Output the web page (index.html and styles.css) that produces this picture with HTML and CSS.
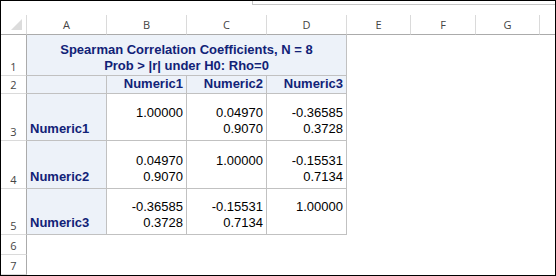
FILE: index.html
```html
<!DOCTYPE html>
<html lang="en">
<head>
    <meta charset="UTF-8">
    <title>Spearman Correlation</title>
    <link rel="stylesheet" href="styles.css">
</head>
<body>

    <div class="sheet">

        <div class="topbar">
            <div class="formula-edge"></div>
        </div>

        <div class="grid">

            <div class="corner"><span class="tri"></span></div>
            <div class="colhead">A</div>
            <div class="colhead">B</div>
            <div class="colhead">C</div>
            <div class="colhead">D</div>
            <div class="colhead">E</div>
            <div class="colhead">F</div>
            <div class="colhead">G</div>
            <div class="colhead last"></div>

            <div class="rownum">1</div>
            <div class="cell head title">
                <div>Spearman Correlation Coefficients, N = 8</div>
                <div>Prob &gt; |r| under H0: Rho=0</div>
            </div>
            <div class="blank"></div>

            <div class="rownum">2</div>
            <div class="cell head top"></div>
            <div class="cell head top num">Numeric1</div>
            <div class="cell head top num">Numeric2</div>
            <div class="cell head top num">Numeric3</div>
            <div class="blank"></div>

            <div class="rownum">3</div>
            <div class="cell head label">Numeric1</div>
            <div class="cell num"><div>1.00000</div><div>&nbsp;</div></div>
            <div class="cell num"><div>0.04970</div><div>0.9070</div></div>
            <div class="cell num"><div>-0.36585</div><div>0.3728</div></div>
            <div class="blank"></div>

            <div class="rownum">4</div>
            <div class="cell head label">Numeric2</div>
            <div class="cell num"><div>0.04970</div><div>0.9070</div></div>
            <div class="cell num"><div>1.00000</div><div>&nbsp;</div></div>
            <div class="cell num"><div>-0.15531</div><div>0.7134</div></div>
            <div class="blank"></div>

            <div class="rownum">5</div>
            <div class="cell head label">Numeric3</div>
            <div class="cell num"><div>-0.36585</div><div>0.3728</div></div>
            <div class="cell num"><div>-0.15531</div><div>0.7134</div></div>
            <div class="cell num"><div>1.00000</div><div>&nbsp;</div></div>
            <div class="blank"></div>

            <div class="rownum">6</div>
            <div class="blank wide"></div>

            <div class="rownum">7</div>
            <div class="blank wide"></div>

        </div>

    </div>

</body>
</html>
```

FILE: styles.css
```css
*{
    box-sizing: border-box;
}

body{
    margin: 0px;
    background: white;
}

.sheet{
    width: 556px;
    height: 276px;
    border: 1px solid black;
    background: white;
    overflow: hidden;
}

.topbar{
    height: 14px;
}

.formula-edge{
    margin-left: 251px;
    height: 4px;
    border-left: 1px solid #c6c6c6;
    border-bottom: 1px solid #c6c6c6;
}

.grid{
    display: grid;
    grid-template-columns: 26px 80px 80px 80px 80px 64px 65px 64px 15px;
    grid-template-rows: 20px 41px 18px 47px 48px 46px 20px 20px;
}

/* column + row headers */
.corner{
    display: flex;
    justify-content: flex-end;
    align-items: flex-end;
    padding: 0 4px 4px 0;
    border-right: 1px solid #dadada;
    border-bottom: 1px solid #ababab;
}

.tri{
    width: 0;
    height: 0;
    border-left: 11px solid transparent;
    border-bottom: 11px solid #dcdcdc;
}

.colhead{
    border-right: 1px solid #dadada;
    border-bottom: 1px solid #ababab;
    text-align: center;
    font: 11px/19px "Open Sans", sans-serif;
    color: #444;
}

.colhead.last{
    border-right: none;
}

.rownum{
    display: flex;
    justify-content: center;
    align-items: flex-end;
    padding-bottom: 1px;
    border-right: 1px solid #ababab;
    border-bottom: 1px solid #dadada;
    font: 11px/14px "Open Sans", sans-serif;
    color: #444;
}

/* table cells */
.cell{
    display: flex;
    flex-direction: column;
    justify-content: flex-end;
    padding: 0 3px 3px 3px;
    border-right: 1px solid #c1c1c1;
    border-bottom: 1px solid #c1c1c1;
    font: 13px/16px "Liberation Sans", Arial, sans-serif;
    color: black;
    white-space: nowrap;
}

.head{
    background: #edf2f9;
    color: #112277;
    font-weight: bold;
}

.title{
    grid-column: span 4;
    align-items: center;
    padding-bottom: 1px;
}

.top{
    padding-bottom: 1px;
}

.num{
    align-items: flex-end;
}

.label{
    align-items: flex-start;
}

.blank{
    grid-column: span 4;
}

.blank.wide{
    grid-column: span 8;
}
```
